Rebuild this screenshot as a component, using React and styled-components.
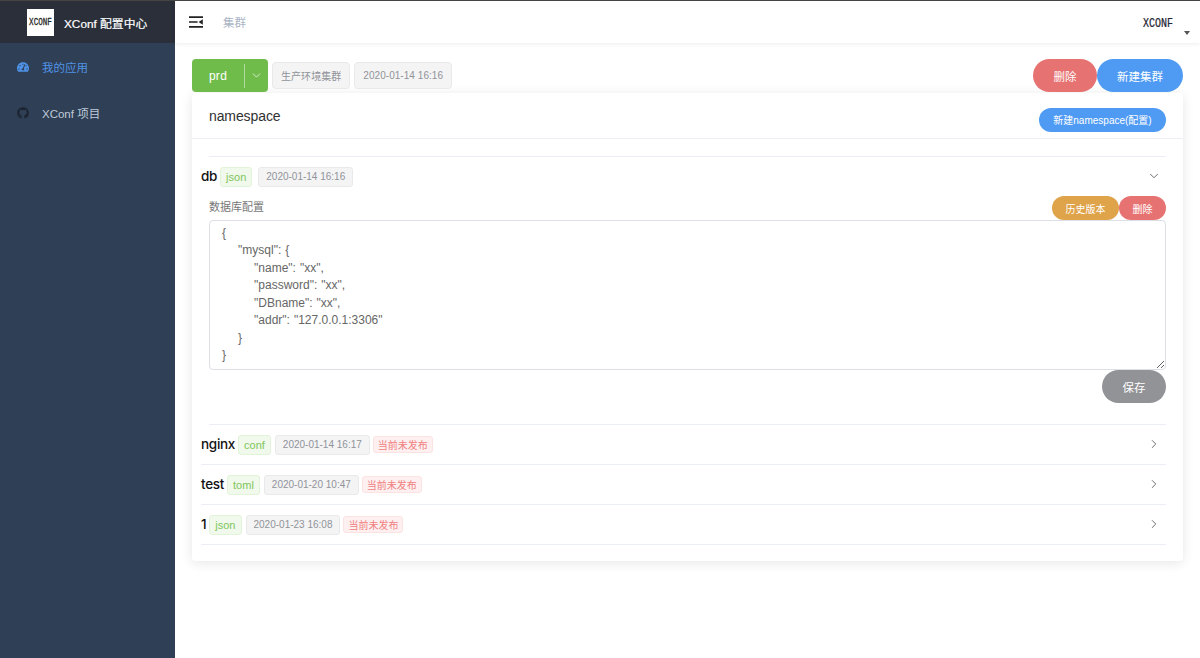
import React from 'react';
import styled, { createGlobalStyle } from 'styled-components';
import { ChevronDown, ChevronRight } from 'lucide-react';
import { FaGithub, FaTachometerAlt } from 'react-icons/fa';

const sans = `"Liberation Sans", "Noto Sans CJK SC", sans-serif`;

const GlobalStyle = createGlobalStyle`
    html, body { margin: 0; height: 100%; background: #fff; }
    #root { height: 100%; }
    * { box-sizing: border-box; }
    body { font-family: ${sans}; }
`;

const code = `{
    "mysql": {
        "name": "xx",
        "password": "xx",
        "DBname": "xx",
        "addr": "127.0.0.1:3306"
    }
}`;

const namespaces = [
    { name: 'nginx', type: 'conf', time: '2020-01-14 16:17' },
    { name: 'test', type: 'toml', time: '2020-01-20 10:47' },
    { name: '1', type: 'json', time: '2020-01-23 16:08' },
];

export default function App() {
    return (
        <Main>
            <GlobalStyle />
            <Sidebar>
                <Brand>
                    <Logo><LogoText>XCONF</LogoText></Logo>
                    <BrandName>XConf 配置中心</BrandName>
                </Brand>
                <MenuItem $active>
                    <FaTachometerAlt size={12} />
                    <span>我的应用</span>
                </MenuItem>
                <MenuItem>
                    <FaGithub size={12} />
                    <span>XConf 项目</span>
                </MenuItem>
            </Sidebar>

            <Content>
                <TopBar>
                    <svg width="14" height="12" viewBox="0 0 14 12">
                        <path d="M0 .3h14v1.6H0zM0 5.2h8.6v1.6H0zM0 10.1h14v1.6H0zM13.8 3.2v5.6L9.6 6z" fill="#222" />
                    </svg>
                    <Crumb>集群</Crumb>
                    <User>
                        <UserName>XCONF</UserName>
                        <Caret />
                    </User>
                </TopBar>

                <Body>
                    <ClusterRow>
                        <SplitButton>
                            <SplitLabel>prd</SplitLabel>
                            <SplitArrow>
                                <ChevronDown size={13} strokeWidth={1.3} />
                            </SplitArrow>
                        </SplitButton>
                        <Tag>生产环境集群</Tag>
                        <Tag>2020-01-14 16:16</Tag>
                        <Actions>
                            <Pill $color="#e77272" $width={64}>删除</Pill>
                            <Pill $color="#4f9bf3" $width={86}>新建集群</Pill>
                        </Actions>
                    </ClusterRow>

                    <Card>
                        <CardHeader>
                            <CardTitle>namespace</CardTitle>
                            <HeaderPill $color="#4f9bf3" $width={127}>新建namespace(配置)</HeaderPill>
                        </CardHeader>
                        <CardBody>
                            <Collapse>
                                <ItemHeader>
                                    <ItemName>db</ItemName>
                                    <TypeTag>json</TypeTag>
                                    <TimeTag $gap={6}>2020-01-14 16:16</TimeTag>
                                    <Arrow><ChevronDown size={14} strokeWidth={1.2} /></Arrow>
                                </ItemHeader>
                                <Panel>
                                    <PanelTop>
                                        <PanelLabel>数据库配置</PanelLabel>
                                        <SmallPill $color="#dfa349" $width={67}>历史版本</SmallPill>
                                        <SmallPill $color="#e77272" $width={47}>删除</SmallPill>
                                    </PanelTop>
                                    <Editor defaultValue={code} spellCheck={false} />
                                    <SaveRow>
                                        <Pill $color="#929397" $width={64}>保存</Pill>
                                    </SaveRow>
                                </Panel>
                                {namespaces.map((ns) => (
                                    <ItemHeader key={ns.name}>
                                        <ItemName>{ns.name}</ItemName>
                                        <TypeTag>{ns.type}</TypeTag>
                                        <TimeTag $gap={4}>{ns.time}</TimeTag>
                                        <DangerTag>当前未发布</DangerTag>
                                        <Arrow><ChevronRight size={14} strokeWidth={1.2} /></Arrow>
                                    </ItemHeader>
                                ))}
                            </Collapse>
                        </CardBody>
                    </Card>
                </Body>
            </Content>
        </Main>
    );
}

const Main = styled.div`
    display: flex;
    width: 100%;
    height: 658px;
    overflow: hidden;
    border-top: 1px solid #444;
`;

const Sidebar = styled.aside`
    width: 175px;
    flex-shrink: 0;
    background: #2f3f55;
`;

const Brand = styled.div`
    height: 42px;
    margin-bottom: 1px;
    display: flex;
    align-items: center;
    padding-left: 27px;
    background: #2b2f3a;
`;

const Logo = styled.div`
    width: 27px;
    height: 27px;
    background: #fff;
    display: flex;
    align-items: center;
    justify-content: center;
`;

const LogoText = styled.span`
    color: #222;
    font-family: "Liberation Mono", monospace;
    font-size: 7.6px;
    transform: scaleY(1.35);
    -webkit-text-stroke: 0.2px #222;
`;

const BrandName = styled.div`
    margin-left: 10px;
    color: #fff;
    font-size: 11.8px;
    -webkit-text-stroke: 0.2px #fff;
`;

const MenuItem = styled.div`
    height: 46px;
    display: flex;
    align-items: center;
    padding-left: 17px;
    gap: 13px;
    font-size: 11.5px;
    color: ${(p) => (p.$active ? '#4f93e6' : '#bfcbd9')};
    & > svg {
        color: ${(p) => (p.$active ? '#4f93e6' : '#1b2430')};
    }
`;

const Content = styled.div`
    flex: 1;
    min-width: 0;
    display: flex;
    flex-direction: column;
`;

const TopBar = styled.header`
    height: 42px;
    display: flex;
    align-items: center;
    padding: 0 10px 0 14px;
    box-shadow: 0 1px 4px rgba(0, 21, 41, 0.08);
`;

const Crumb = styled.span`
    margin-left: 20px;
    font-size: 11.5px;
    color: #a9b4c4;
`;

const User = styled.div`
    margin-left: auto;
    position: relative;
    display: flex;
    align-items: center;
    margin-top: 2px;
`;

const UserName = styled.span`
    font-family: "Liberation Mono", monospace;
    font-size: 10px;
    color: #1d2433;
    margin-right: 17px;
    transform: scaleY(1.2);
    -webkit-text-stroke: 0.2px #1d2433;
`;

const Caret = styled.span`
    position: absolute;
    right: 0;
    top: 13px;
    border: 3px solid transparent;
    border-top: 4px solid #555;
`;

const Body = styled.main`
    padding: 16px 17px 0;
`;

const ClusterRow = styled.div`
    display: flex;
    align-items: center;
    height: 33px;
    gap: 4px;
`;

const SplitButton = styled.div`
    width: 76px;
    height: 33px;
    display: flex;
    align-items: center;
    border-radius: 4px;
    background: #70bc4b;
    color: #fff;
`;

const SplitLabel = styled.span`
    width: 52px;
    text-align: center;
    font-size: 12px;
    letter-spacing: 0.3px;
`;

const SplitArrow = styled.span`
    flex: 1;
    height: 24px;
    display: flex;
    align-items: center;
    justify-content: center;
    border-left: 1px solid rgba(255, 255, 255, 0.45);
`;

const Tag = styled.span`
    height: 27px;
    display: inline-flex;
    align-items: center;
    padding: 0 8px;
    font-size: 10px;
    letter-spacing: 0.05px;
    color: #909399;
    background: #f4f4f5;
    border: 1px solid #e9e9eb;
    border-radius: 4px;
`;

const Actions = styled.div`
    margin-left: auto;
    display: flex;
`;

const Pill = styled.button`
    width: ${(p) => p.$width}px;
    height: 33px;
    padding: 0;
    border: none;
    border-radius: 20px;
    color: #fff;
    background: ${(p) => p.$color};
    font-family: ${sans};
    font-size: 11.5px;
`;

const SmallPill = styled(Pill)`
    height: 24px;
    font-size: 10px;
    flex-shrink: 0;
`;

const HeaderPill = styled(SmallPill)`
    margin-top: 8px;
`;

const Card = styled.section`
    margin-top: 1px;
    height: 468px;
    border-radius: 4px;
    background: #fff;
    box-shadow: 0 2px 12px rgba(0, 0, 0, 0.1);
`;

const CardHeader = styled.div`
    height: 46px;
    display: flex;
    align-items: center;
    justify-content: space-between;
    padding: 0 17px;
    border-bottom: 1px solid #ebeef5;
`;

const CardTitle = styled.span`
    font-size: 14px;
    letter-spacing: -0.1px;
    color: #303133;
`;

const CardBody = styled.div`
    padding: 17px;
`;

const Collapse = styled.div`
    border-top: 1px solid #ebeef5;
`;

const ItemHeader = styled.div`
    height: 40px;
    display: flex;
    align-items: center;
    margin-left: -8px;
    border-bottom: 1px solid #ebeef5;
    position: relative;
    &:first-child {
        border-bottom: none;
        height: 39px;
    }
`;

const ItemName = styled.span`
    font-family: Inter, sans-serif;
    font-size: 13.5px;
    font-weight: 500;
    letter-spacing: -0.3px;
    color: #111;
    margin-right: 3px;
    margin-top: -1px;
`;

const BaseTag = styled.span`
    display: inline-flex;
    align-items: center;
    height: 20px;
    padding: 0 5px;
    font-size: 10px;
    border-radius: 3px;
    border: 1px solid;
`;

const TypeTag = styled(BaseTag)`
    font-size: 11px;
    color: #7fc65c;
    background: #f0f9eb;
    border-color: #e1f3d8;
`;

const TimeTag = styled(BaseTag)`
    margin-left: ${(p) => p.$gap}px;
    padding: 0 7px;
    color: #909399;
    background: #f4f4f5;
    border-color: #e9e9eb;
`;

const DangerTag = styled(BaseTag)`
    margin-left: 3px;
    height: 17px;
    padding: 0 4px;
    color: #f08080;
    background: #fef0f0;
    border-color: #fde2e2;
`;

const Arrow = styled.span`
    margin-left: auto;
    margin-top: -1px;
    display: flex;
    color: #333;
    padding-right: 5px;
`;

const Panel = styled.div`
    height: 229px;
    border-bottom: 1px solid #ebeef5;
`;

const PanelTop = styled.div`
    display: flex;
    align-items: center;
    height: 24px;
`;

const PanelLabel = styled.span`
    margin-right: auto;
    margin-top: -4px;
    font-size: 11px;
    color: #777;
`;

const Editor = styled.textarea`
    display: block;
    width: 100%;
    height: 150px;
    padding: 3.5px 12px;
    border: 1px solid #dcdfe6;
    border-radius: 4px;
    outline: none;
    font-family: ${sans};
    font-size: 12px;
    line-height: 17.5px;
    word-spacing: 0.67px;
    color: #666;
    resize: vertical;
`;

const SaveRow = styled.div`
    display: flex;
    justify-content: flex-end;
`;
